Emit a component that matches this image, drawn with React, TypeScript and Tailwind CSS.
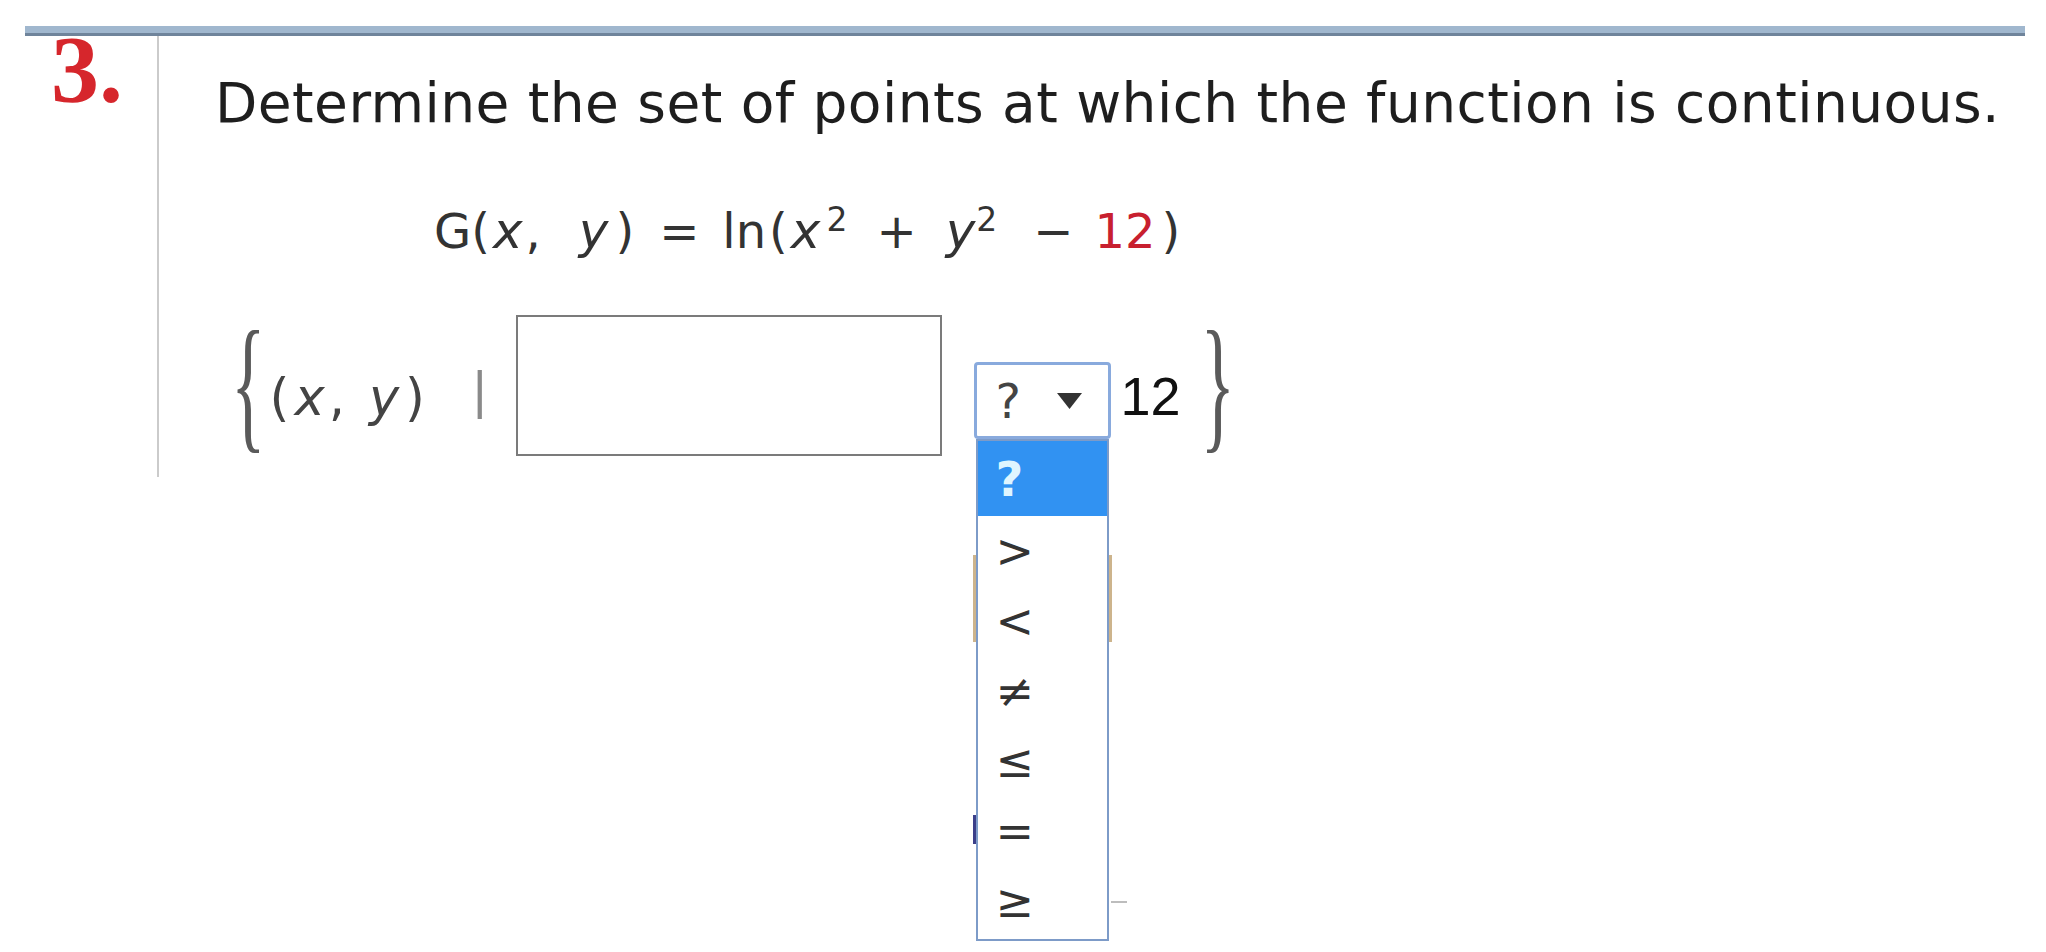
const operators = [">", "<", "≠", "≤", "=", "≥"];

function Formula() {
  return (
    <p className="ml-[219px] mt-[75px] whitespace-nowrap text-[48px] leading-none text-[#333]">
      <span>G</span>
      <span>(</span>
      <i className="ml-[3px] text-[50px]">x</i>
      <span className="ml-[3px]">,</span>
      <i className="ml-[38px] text-[50px]">y</i>
      <span className="ml-[7px]">)</span>
      <span className="ml-[25px]">=</span>
      <span className="ml-[23px]">ln</span>
      <span className="ml-[3px]">(</span>
      <i className="ml-[3px] text-[50px]">x</i>
      <span className="relative -top-[17px] ml-[6px] text-[33px]">2</span>
      <span className="ml-[29px]">+</span>
      <i className="ml-[29px] text-[50px]">y</i>
      <span className="relative -top-[17px] ml-[1px] text-[33px]">2</span>
      <span className="ml-[36px]">−</span>
      <span className="ml-[21px] text-[#c8202f]">12</span>
      <span className="ml-[6px]">)</span>
    </p>
  );
}

function Brace({ children, className = "" }: { children: string; className?: string }) {
  return (
    <span
      className={`mt-[33px] inline-block scale-y-[2.05] font-['Liberation_Serif',serif] text-[72px] leading-none text-[#5a5a5a] ${className}`}
    >
      {children}
    </span>
  );
}

function RelationSelect() {
  return (
    <div className="relative ml-[32px] mt-[47px]">
      {/* bits of the page peeking out beside the open list */}
      <div className="absolute left-[-1px] top-[193px] h-[87px] w-[3px] bg-[#cdb48c]" />
      <div className="absolute left-[135px] top-[193px] h-[87px] w-[3px] bg-[#cdb48c]" />
      <div className="absolute left-[-1px] top-[453px] h-[29px] w-[3px] bg-[#3b3f8a]" />
      <div className="absolute left-[137px] top-[539px] h-[2px] w-[16px] bg-[#bdbdbd]" />

      <div className="flex h-[77px] w-[137px] items-center rounded-[4px] border-[3px] border-[#89aadd] bg-white pl-[18px]">
        <span className="text-[48px] leading-none text-[#444]">?</span>
        <svg className="ml-[36px]" width="25" height="16" viewBox="0 0 25 16">
          <polygon points="0,0 25,0 12.5,16" fill="#333" />
        </svg>
      </div>

      <div className="absolute left-[2px] top-[77px] z-10 w-[133px] border-2 border-[#7d9bc8] bg-white pb-[3px]">
        <div className="flex h-[75px] items-center bg-[#3192f2] pl-[17px] text-[48px] font-bold leading-none text-[#dff5ff]">
          ?
        </div>
        {operators.map((op) => (
          <div className="flex h-[70px] items-center pl-[17px] text-[46px] leading-none text-[#333]" key={op}>
            {op}
          </div>
        ))}
      </div>
    </div>
  );
}

function SetRow() {
  return (
    <div className="mt-[59px] flex items-start whitespace-nowrap">
      <Brace className="ml-[16px]">{"{"}</Brace>
      <span className="ml-[4px] mt-[57px] text-[51px] leading-none text-[#444]">
        (<i className="ml-[5px]">x</i>
        <span className="ml-[4px]">,</span>
        <i className="ml-[24px]">y</i>
        <span className="ml-[6px]">)</span>
      </span>
      <span className="ml-[48px] mt-[49px] font-['Liberation_Sans',sans-serif] text-[52px] leading-none text-[#8a8a8a]">|</span>
      <input
        className="ml-[30px] h-[141px] w-[426px] border-2 border-[#7b7b7b] bg-white outline-none"
        readOnly
        type="text"
      />
      <RelationSelect />
      <span className="ml-[9px] mt-[54px] font-['Liberation_Sans',sans-serif] text-[54px] leading-none text-[#111]">12</span>
      <Brace className="ml-[20px]">{"}"}</Brace>
    </div>
  );
}

export default function App() {
  return (
    <div className="min-h-screen w-full bg-white pl-[25px] pt-[26px] font-['DejaVu_Sans',sans-serif]">
      <div className="h-[10px] w-[2000px] border-b-[3px] border-[#6f849b] bg-[#a0b7ce]" />
      <div className="flex">
        <div className="w-[132px] shrink-0 pl-[26px]">
          <div className="-mt-[14px] font-['Liberation_Serif',serif] text-[96px] font-bold leading-none text-[#d6262c]">
            3.
          </div>
        </div>
        <div className="h-[441px] border-l-2 border-[#cbcbcb] pl-[56px] pt-[40px]">
          <p className="whitespace-nowrap text-[55px] leading-none tracking-[0.45px] text-[#1e1e1e]">
            Determine the set of points at which the function is continuous.
          </p>
          <Formula />
          <SetRow />
        </div>
      </div>
    </div>
  );
}
